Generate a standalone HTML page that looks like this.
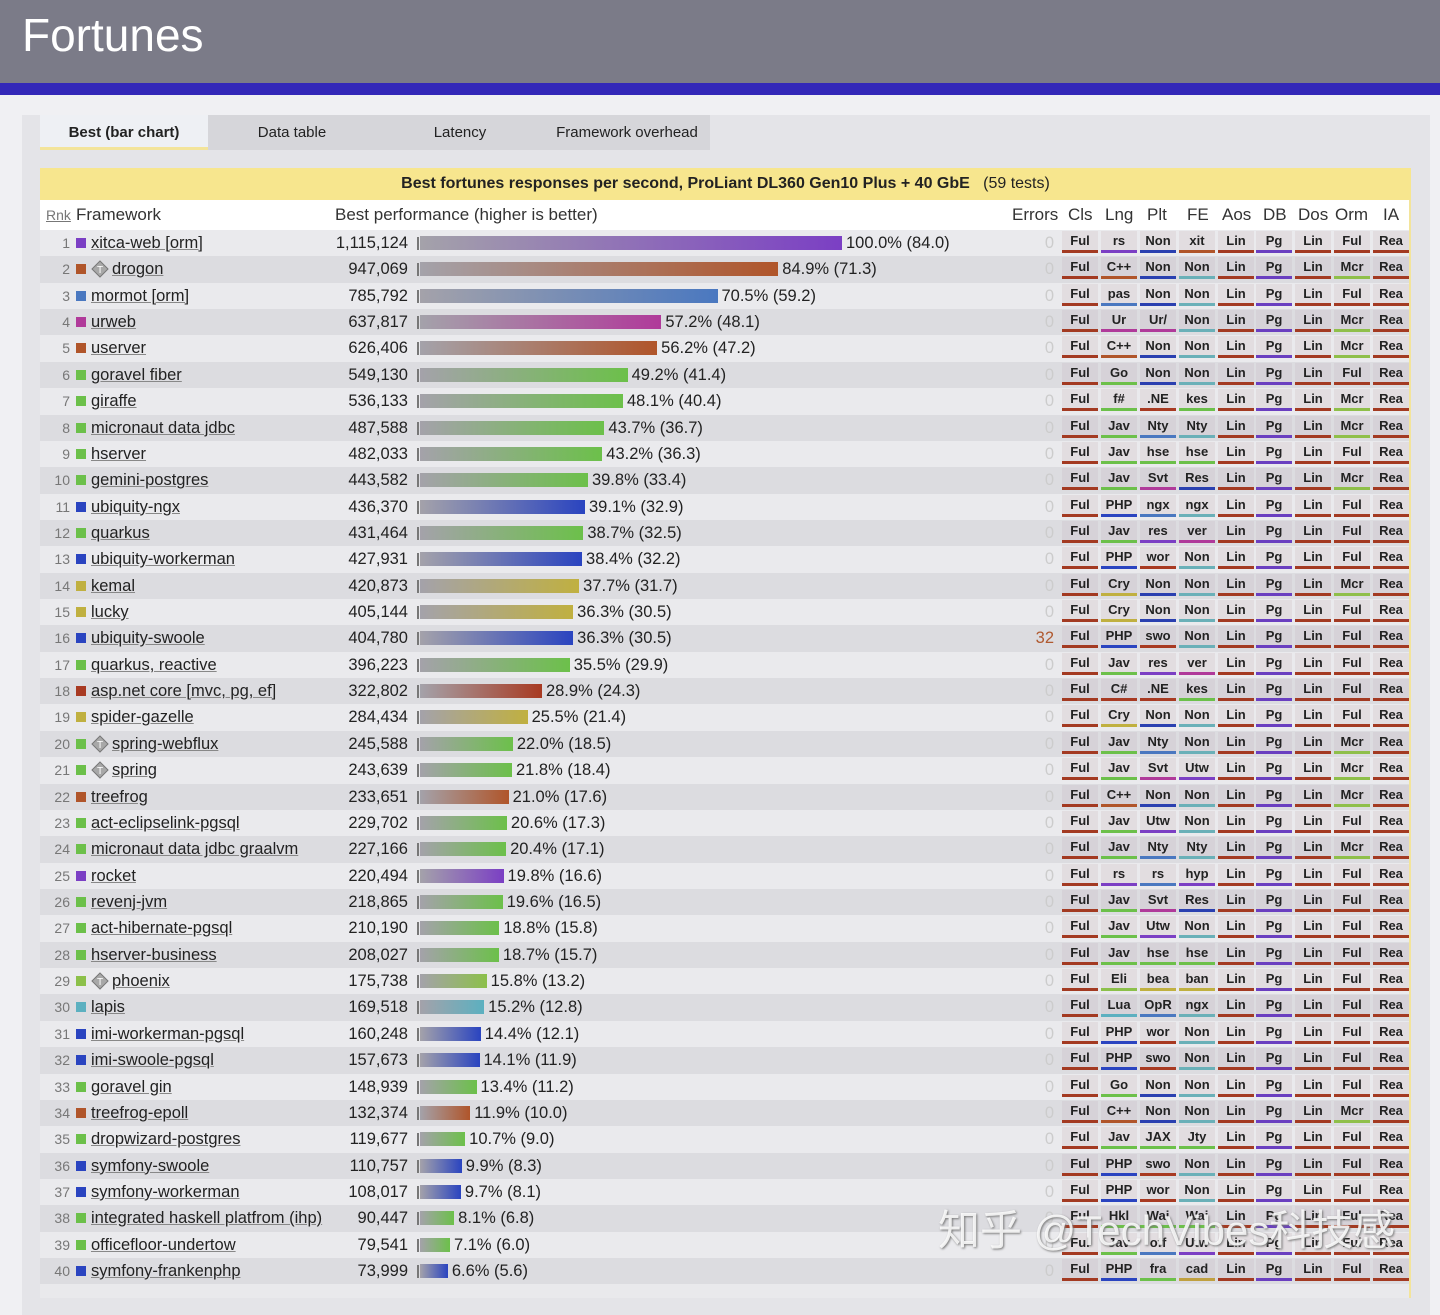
<!DOCTYPE html>
<html><head><meta charset="utf-8"><style>
*{margin:0;padding:0;box-sizing:border-box}
body{width:1440px;height:1284px;overflow:hidden;background:#f0f0f3;font-family:"Liberation Sans",sans-serif;color:#222;position:relative}
#hdr{position:absolute;left:0;top:0;width:1440px;height:83px;background:#7b7b88}
#hdr h1{position:absolute;left:22px;top:8px;font-weight:normal;font-size:46px;color:#fff}
#stripe{position:absolute;left:0;top:83px;width:1440px;height:12px;background:#3328b8}
#panel{position:absolute;left:22px;top:115px;width:1408px;height:1200px;background:#e4e4e8}
.tab{position:absolute;top:115px;height:35px;line-height:35px;text-align:center;font-size:15px;background:#d6d6da;color:#222}
#tbl{position:absolute;left:40px;top:168px;width:1371px;height:1130px;background:#e9e9ec;border-right:2px solid #f3e49a}
#cap{position:absolute;left:0;top:0;width:1371px;height:32px;background:#f7e68e;text-align:center;line-height:32px;font-size:16px}
#colh{position:absolute;left:0;top:32px;width:1369px;height:30px;background:#fff;font-size:17px;line-height:30px;color:#333}
#colh span{position:absolute}
.row{position:absolute;left:0;width:1369px;height:26.36px;font-size:16.5px;line-height:26px}
.row span{position:absolute;white-space:nowrap;top:0}
.rk{left:0;width:30px;text-align:right;color:#777;font-size:14px}
.sq{left:36px;top:8px!important;width:10px;height:10px}
.nm{text-decoration:underline;text-decoration-color:#888;color:#222}
.num{left:200px;width:168px;text-align:right}
.tick{left:377px;top:7px!important;width:2px;height:13px;background:#777}
.bar{left:380px;top:6px!important;height:14px}
.er{left:950px;width:64px;text-align:right;color:#ccc}
.tg{width:36px;height:22px;top:1px!important;text-align:center;font-size:13px;font-weight:bold;line-height:19px;border-bottom:3px solid #a33a22;color:#222}
.ic{left:51px;top:4px!important;width:18px;height:18px}
#wm{position:absolute;left:938px;top:1197px;font-size:42px;color:rgba(255,255,255,.85);text-shadow:1px 1px 2px #777;font-family:"Liberation Sans","Noto Sans CJK SC",sans-serif;white-space:nowrap}
</style></head><body>
<div id="hdr"><h1>Fortunes</h1></div>
<div id="stripe"></div>
<div id="panel"></div>
<div class="tab" style="left:40px;width:168px;background:#eef0f4;font-weight:bold;border-bottom:3px solid #f3e49a">Best (bar chart)</div>
<div class="tab" style="left:208px;width:168px">Data table</div>
<div class="tab" style="left:376px;width:168px">Latency</div>
<div class="tab" style="left:544px;width:166px">Framework overhead</div>
<div id="tbl">
<div id="cap"><b>Best fortunes responses per second, ProLiant DL360 Gen10 Plus + 40 GbE</b> &nbsp;&nbsp;(59 tests)</div>
<div id="colh">
<span style="left:6px;font-size:14px;color:#777;text-decoration:underline">Rnk</span>
<span style="left:36px">Framework</span>
<span style="left:295px">Best performance (higher is better)</span>
<span style="left:972px">Errors</span>
<span style="left:1028px">Cls</span><span style="left:1065px">Lng</span><span style="left:1107px">Plt</span><span style="left:1147px">FE</span><span style="left:1182px">Aos</span><span style="left:1223px">DB</span><span style="left:1258px">Dos</span><span style="left:1295px">Orm</span><span style="left:1343px">IA</span>
</div>
<div id="rows"></div>
</div>
<div id="wm">知乎 @TechVibes科技感</div>
<script>
var C={P:"#7b3fc4",B:"#b0552a",L:"#4a78c0",M:"#b03a9a",G:"#6cc04a",D:"#2a44c0",Y:"#c0b040",T:"#5cb0c0",R:"#a83a22",Lg:"#8cc04a"};
var F="Ful Lin Pg Lin Ful Rea",Mc="Ful Lin Pg Lin Mcr Rea";
var d=[
["P","xitca-web [orm]",0,"1,115,124",100.0,"84.0",0,"rs Non xit",F],
["B","drogon",1,"947,069",84.9,"71.3",0,"C++ Non Non",Mc],
["L","mormot [orm]",0,"785,792",70.5,"59.2",0,"pas Non Non",F],
["M","urweb",0,"637,817",57.2,"48.1",0,"Ur Ur/ Non",Mc],
["B","userver",0,"626,406",56.2,"47.2",0,"C++ Non Non",Mc],
["G","goravel fiber",0,"549,130",49.2,"41.4",0,"Go Non Non",F],
["G","giraffe",0,"536,133",48.1,"40.4",0,"f# .NE kes",Mc],
["G","micronaut data jdbc",0,"487,588",43.7,"36.7",0,"Jav Nty Nty",Mc],
["G","hserver",0,"482,033",43.2,"36.3",0,"Jav hse hse",F],
["G","gemini-postgres",0,"443,582",39.8,"33.4",0,"Jav Svt Res",Mc],
["D","ubiquity-ngx",0,"436,370",39.1,"32.9",0,"PHP ngx ngx",F],
["G","quarkus",0,"431,464",38.7,"32.5",0,"Jav res ver",F],
["D","ubiquity-workerman",0,"427,931",38.4,"32.2",0,"PHP wor Non",F],
["Y","kemal",0,"420,873",37.7,"31.7",0,"Cry Non Non",Mc],
["Y","lucky",0,"405,144",36.3,"30.5",0,"Cry Non Non",F],
["D","ubiquity-swoole",0,"404,780",36.3,"30.5",32,"PHP swo Non",F],
["G","quarkus, reactive",0,"396,223",35.5,"29.9",0,"Jav res ver",F],
["R","asp.net core [mvc, pg, ef]",0,"322,802",28.9,"24.3",0,"C# .NE kes",F],
["Y","spider-gazelle",0,"284,434",25.5,"21.4",0,"Cry Non Non",F],
["G","spring-webflux",1,"245,588",22.0,"18.5",0,"Jav Nty Non",Mc],
["G","spring",1,"243,639",21.8,"18.4",0,"Jav Svt Utw",Mc],
["B","treefrog",0,"233,651",21.0,"17.6",0,"C++ Non Non",Mc],
["G","act-eclipselink-pgsql",0,"229,702",20.6,"17.3",0,"Jav Utw Non",F],
["G","micronaut data jdbc graalvm",0,"227,166",20.4,"17.1",0,"Jav Nty Nty",Mc],
["P","rocket",0,"220,494",19.8,"16.6",0,"rs rs hyp",F],
["G","revenj-jvm",0,"218,865",19.6,"16.5",0,"Jav Svt Res",F],
["G","act-hibernate-pgsql",0,"210,190",18.8,"15.8",0,"Jav Utw Non",F],
["G","hserver-business",0,"208,027",18.7,"15.7",0,"Jav hse hse",F],
["Lg","phoenix",1,"175,738",15.8,"13.2",0,"Eli bea ban",F],
["T","lapis",0,"169,518",15.2,"12.8",0,"Lua OpR ngx",F],
["D","imi-workerman-pgsql",0,"160,248",14.4,"12.1",0,"PHP wor Non",F],
["D","imi-swoole-pgsql",0,"157,673",14.1,"11.9",0,"PHP swo Non",F],
["G","goravel gin",0,"148,939",13.4,"11.2",0,"Go Non Non",F],
["B","treefrog-epoll",0,"132,374",11.9,"10.0",0,"C++ Non Non",Mc],
["G","dropwizard-postgres",0,"119,677",10.7,"9.0",0,"Jav JAX Jty",F],
["D","symfony-swoole",0,"110,757",9.9,"8.3",0,"PHP swo Non",F],
["D","symfony-workerman",0,"108,017",9.7,"8.1",0,"PHP wor Non",F],
["G","integrated haskell platfrom (ihp)",0,"90,447",8.1,"6.8",0,"Hkl Wai Wai",F],
["G","officefloor-undertow",0,"79,541",7.1,"6.0",0,"Jav off Utw",F],
["D","symfony-frankenphp",0,"73,999",6.6,"5.6",0,"PHP fra cad",F]];
var lc={rs:C.P,"C++":C.B,pas:C.L,Ur:C.M,Go:C.G,"f#":C.G,Jav:C.G,PHP:C.D,Cry:C.Y,"C#":C.R,Eli:C.Lg,Lua:C.T,Hkl:C.G};
var oc={Non:"#2a40b0",".NE":C.R,Nty:C.L,hse:C.G,Svt:C.M,ngx:C.L,res:C.P,wor:C.R,swo:C.R,"Ur/":C.M,Utw:C.P,bea:C.Y,OpR:C.L,JAX:C.G,Wai:C.G,off:C.L,fra:C.G};
var fc={Non:"#6ab0b8",xit:C.B,kes:C.G,Nty:"#6ab0b8",hse:C.G,Res:"#2a40b0",ngx:"#6ab0b8",ver:C.M,hyp:C.P,ban:C.Y,Jty:C.G,Utw:C.P,Wai:C.G,cad:"#c0a040"};
var xs=[1022,1061,1100,1139,1178,1216,1255,1294,1333];
var h="";
d.forEach(function(r,i){
 var top=62+i*26.36,bg=i%2?"#dcdce0":"#eaeaed",col=C[r[0]];
 h+='<div class="row" style="top:'+top+'px;background:'+bg+'">';
 h+='<span class="rk">'+(i+1)+'</span><span class="sq" style="background:'+col+'"></span>';
 var nx=51;
 if(r[2]){h+='<span class="ic"><svg width="18" height="18"><polygon points="9,1 17,9 9,17 1,9" fill="#a8a8a8" stroke="#777"/><text x="9" y="13" font-size="10" text-anchor="middle" fill="#fff" font-family="Liberation Sans">T</text></svg></span>';nx=72;}
 h+='<span class="nm" style="left:'+nx+'px">'+r[1]+'</span>';
 h+='<span class="num">'+r[3]+'</span><span class="tick"></span>';
 var w=r[4]*4.22;
 h+='<span class="bar" style="width:'+w+'px;background:linear-gradient(90deg,#a4a2aa,'+col+')"></span>';
 h+='<span style="left:'+(384+w)+'px">'+r[4].toFixed(1)+'% ('+r[5]+')</span>';
 h+='<span class="er"'+(r[6]?' style="color:#b05a30"':'')+'>'+r[6]+'</span>';
 var m=r[7].split(" "),o=r[8].split(" ");
 var t=[o[0],m[0],m[1],m[2],o[1],o[2],o[3],o[4],o[5]];
 t.forEach(function(s,j){
  var bc="#a33a22";
  if(j==1)bc=lc[s]||C.G; else if(j==2)bc=oc[s]||C.L; else if(j==3)bc=fc[s]||C.G;
  else if(j==5)bc="#6a3fc0"; else if(s=="Mcr")bc="#8fbf4a";
  h+='<span class="tg" style="left:'+xs[j]+'px;border-bottom-color:'+bc+';background-color:'+(i%2?"#d6d2d8":"#e2dde0")+'">'+s+'</span>';
 });
 h+='</div>';
});
document.getElementById("rows").innerHTML=h;
</script>
</body></html>
